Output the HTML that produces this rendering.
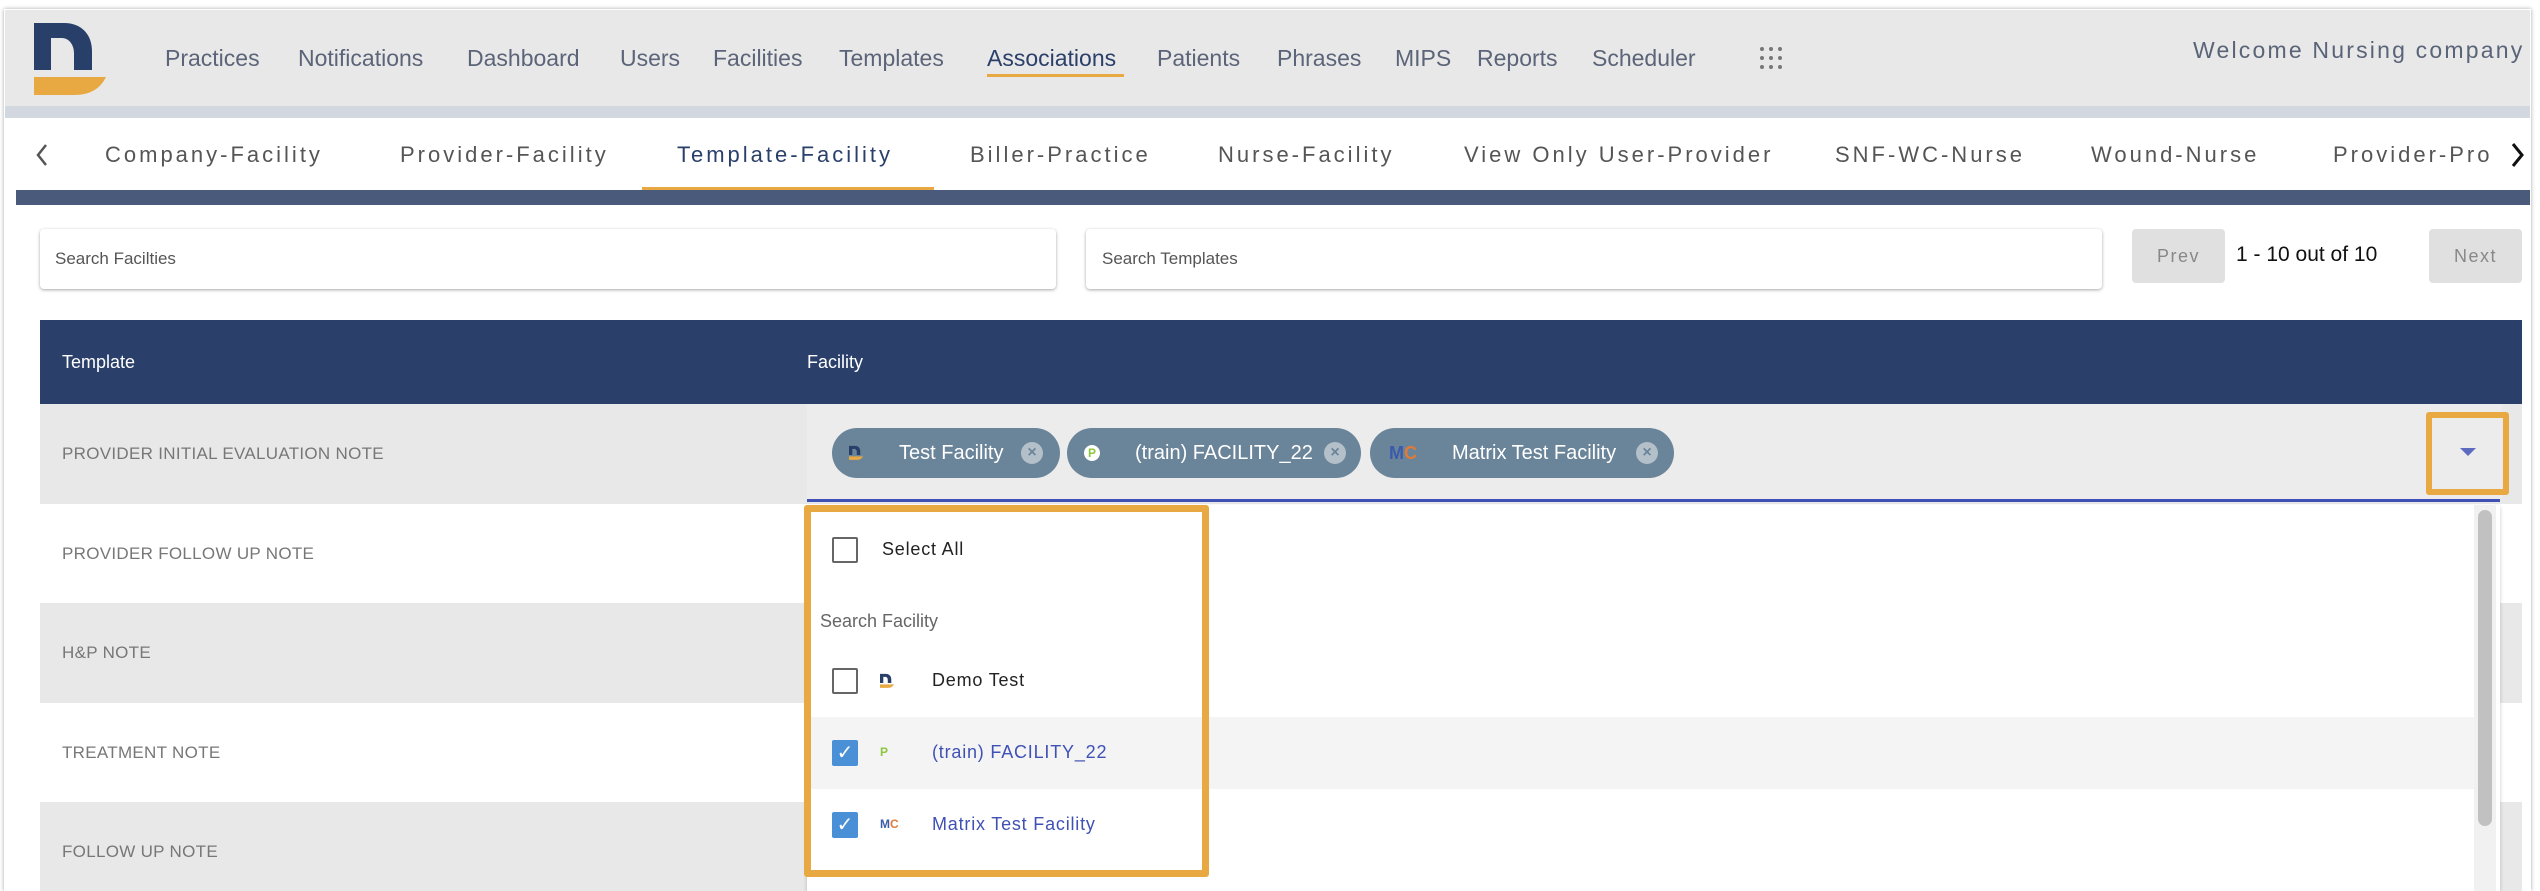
<!DOCTYPE html>
<html><head><meta charset="utf-8"><style>
*{margin:0;padding:0;box-sizing:border-box}
body{width:2540px;height:891px;background:#fff;position:relative;overflow:hidden;font-family:"Liberation Sans",sans-serif}
.a{position:absolute;white-space:nowrap}
.nav{top:45px;font-size:23px;color:#5b6478}
.tab{top:142px;font-size:22px;color:#555;letter-spacing:3px}
.lbl{left:62px;font-size:17px;color:#777;letter-spacing:.3px}
.chip{position:absolute;top:428px;height:50px;border-radius:25px;background:#6a8499}
.ct{position:absolute;top:14px;font-size:20px;color:#fff}
.cx{position:absolute;top:14px;width:22px;height:22px;border-radius:50%;background:#b3c0ca;color:#6a8499;font-size:16px;text-align:center;line-height:22px;font-weight:bold}
.cb{position:absolute;width:26px;height:26px;border:2.5px solid #666;border-radius:2px}
.cbc{position:absolute;width:26px;height:26px;background:#4a90d6;border-radius:2px;color:#fff;font-size:20px;text-align:center;line-height:26px}
</style></head><body>
<div class="a" style="left:4px;top:9px;width:2527px;height:882px;background:#fff;box-shadow:0 0 4px rgba(0,0,0,.35)"></div>
<div class="a" style="left:5px;top:10px;width:2525px;height:96px;background:#e8e8e8"></div>
<div class="a" style="left:5px;top:106px;width:2525px;height:12px;background:#d3d7e0"></div>
<svg class="a" style="left:34px;top:23px" width="72" height="73" viewBox="0 0 72 73">
<path d="M0 0 H30 C48 0 58 12 58 28 V47 H40 V30 C40 22 35 15 28 15 H17 V47 H0 Z" fill="#283f6a"/>
<path d="M0 54 H72 C66 66 56 72 40 72 H0 Z" fill="#e8a942"/>
</svg>
<div class="a nav" style="left:165px">Practices</div>
<div class="a nav" style="left:298px">Notifications</div>
<div class="a nav" style="left:467px">Dashboard</div>
<div class="a nav" style="left:620px">Users</div>
<div class="a nav" style="left:713px">Facilities</div>
<div class="a nav" style="left:839px">Templates</div>
<div class="a nav" style="left:987px;color:#2a3f69">Associations</div>
<div class="a" style="left:987px;top:74px;width:137px;height:3px;background:#e8a942"></div>
<div class="a nav" style="left:1157px">Patients</div>
<div class="a nav" style="left:1277px">Phrases</div>
<div class="a nav" style="left:1395px">MIPS</div>
<div class="a nav" style="left:1477px">Reports</div>
<div class="a nav" style="left:1592px">Scheduler</div>
<svg class="a" style="left:1759px;top:46px" width="24" height="24"><g fill="#777">
<circle cx="3" cy="3" r="2"/><circle cx="12" cy="3" r="2"/><circle cx="21" cy="3" r="2"/>
<circle cx="3" cy="12" r="2"/><circle cx="12" cy="12" r="2"/><circle cx="21" cy="12" r="2"/>
<circle cx="3" cy="21" r="2"/><circle cx="12" cy="21" r="2"/><circle cx="21" cy="21" r="2"/></g></svg>
<div class="a" style="left:2193px;top:37px;width:337px;overflow:hidden;font-size:23px;color:#5a6478;letter-spacing:2.2px">Welcome Nursing company</div>
<div class="a" style="left:8px;top:118px;width:2522px;height:72px;background:#fff"></div>
<svg class="a" style="left:34px;top:143px" width="16" height="24"><path d="M12 2 L4 12 L12 22" stroke="#555" stroke-width="2.5" fill="none"/></svg>
<div class="a tab" style="left:105px">Company-Facility</div>
<div class="a tab" style="left:400px">Provider-Facility</div>
<div class="a tab" style="left:677px;color:#2a3f69">Template-Facility</div>
<div class="a tab" style="left:970px">Biller-Practice</div>
<div class="a tab" style="left:1218px">Nurse-Facility</div>
<div class="a tab" style="left:1464px">View Only User-Provider</div>
<div class="a tab" style="left:1835px">SNF-WC-Nurse</div>
<div class="a tab" style="left:2091px">Wound-Nurse</div>
<div class="a" style="left:2333px;top:142px;width:158px;overflow:hidden;font-size:22px;color:#555;letter-spacing:3px">Provider-Provider</div>
<svg class="a" style="left:2509px;top:142px" width="16" height="26"><path d="M4 2 L13 13 L4 24" stroke="#111" stroke-width="3" fill="none"/></svg>
<div class="a" style="left:642px;top:187px;width:292px;height:3px;background:#e8a942"></div>
<div class="a" style="left:16px;top:190px;width:2514px;height:15px;background:#4a5a7a"></div>
<div class="a" style="left:40px;top:229px;width:1016px;height:60px;background:#fff;border-radius:4px;box-shadow:0 1px 3px rgba(0,0,0,.35)"></div>
<div class="a" style="left:55px;top:249px;font-size:17px;color:#555">Search Facilties</div>
<div class="a" style="left:1086px;top:229px;width:1016px;height:60px;background:#fff;border-radius:4px;box-shadow:0 1px 3px rgba(0,0,0,.35)"></div>
<div class="a" style="left:1102px;top:249px;font-size:17px;color:#555">Search Templates</div>
<div class="a" style="left:2132px;top:229px;width:93px;height:54px;background:#e0e0e0;border-radius:4px;color:#888;font-size:18px;text-align:center;line-height:54px;letter-spacing:1.5px">Prev</div>
<div class="a" style="left:2236px;top:243px;font-size:21px;color:#111">1 - 10 out of 10</div>
<div class="a" style="left:2429px;top:229px;width:93px;height:54px;background:#e0e0e0;border-radius:4px;color:#888;font-size:18px;text-align:center;line-height:54px;letter-spacing:1.5px">Next</div>
<div class="a" style="left:40px;top:320px;width:2482px;height:84px;background:#2a3f69"></div>
<div class="a" style="left:62px;top:352px;font-size:18px;color:#fff">Template</div>
<div class="a" style="left:807px;top:352px;font-size:18px;color:#fff">Facility</div>
<div class="a" style="left:40px;top:404px;width:2482px;height:100px;background:#e8e8e8"></div>
<div class="a" style="left:807px;top:404px;width:1695px;height:95px;background:#ececec"></div>
<div class="a" style="left:807px;top:499px;width:1693px;height:3px;background:#3f51b5"></div>
<div class="a" style="left:40px;top:603px;width:2482px;height:100px;background:#e8e8e8"></div>
<div class="a" style="left:40px;top:802px;width:2482px;height:89px;background:#e8e8e8"></div>
<div class="a lbl" style="top:444px">PROVIDER INITIAL EVALUATION NOTE</div>
<div class="a lbl" style="top:544px">PROVIDER FOLLOW UP NOTE</div>
<div class="a lbl" style="top:643px">H&amp;P NOTE</div>
<div class="a lbl" style="top:743px">TREATMENT NOTE</div>
<div class="a lbl" style="top:842px">FOLLOW UP NOTE</div>
<div class="chip" style="left:832px;width:228px">
 <svg class="a" style="left:17px;top:16px" width="14" height="18" viewBox="0 0 72 73"><path d="M0 0 H30 C48 0 58 12 58 28 V47 H40 V30 C40 22 35 15 28 15 H17 V47 H0 Z" fill="#283f6a"/><path d="M0 54 H72 C66 66 56 72 40 72 H0 Z" fill="#e8a942"/></svg>
 <div class="ct" style="left:67px">Test Facility</div><div class="cx" style="left:189px">×</div></div>
<div class="chip" style="left:1067px;width:294px">
 <div class="a" style="left:17px;top:17px;width:16px;height:16px;border-radius:50%;background:#fff;color:#8cc63f;font-size:12px;text-align:center;line-height:16px;font-weight:bold">P</div>
 <div class="ct" style="left:68px">(train) FACILITY_22</div><div class="cx" style="left:257px">×</div></div>
<div class="chip" style="left:1370px;width:304px">
 <div class="a" style="left:19px;top:15px;font-size:18px;font-weight:bold;color:#3b5ba9">M<span style="color:#e07a3a">C</span></div>
 <div class="ct" style="left:82px">Matrix Test Facility</div><div class="cx" style="left:266px">×</div></div>
<div class="a" style="left:2426px;top:412px;width:83px;height:83px;border:6px solid #e8a942;border-radius:3px"></div>
<svg class="a" style="left:2460px;top:448px" width="16" height="10"><path d="M0 0 H16 L8 8 Z" fill="#5c6bc0"/></svg>
<div class="a" style="left:807px;top:505px;width:1693px;height:386px;background:#fff;box-shadow:0 2px 4px rgba(0,0,0,.2)"></div>
<div class="a" style="left:811px;top:717px;width:1663px;height:72px;background:#f4f4f4"></div>
<div class="a" style="left:2474px;top:505px;width:22px;height:386px;background:#f1f1f1"></div>
<div class="a" style="left:2478px;top:510px;width:14px;height:316px;background:#c1c1c1;border-radius:7px"></div>
<div class="a" style="left:804px;top:505px;width:405px;height:372px;border:7px solid #e8a942;border-radius:3px"></div>
<div class="cb" style="left:832px;top:537px"></div>
<div class="a" style="left:882px;top:539px;font-size:18px;color:#222;letter-spacing:.8px">Select All</div>
<div class="a" style="left:820px;top:611px;font-size:18px;color:#666">Search Facility</div>
<div class="cb" style="left:832px;top:668px"></div>
<svg class="a" style="left:880px;top:673px" width="14" height="16" viewBox="0 0 72 73"><path d="M0 0 H30 C48 0 58 12 58 28 V47 H40 V30 C40 22 35 15 28 15 H17 V47 H0 Z" fill="#283f6a"/><path d="M0 54 H72 C66 66 56 72 40 72 H0 Z" fill="#e8a942"/></svg>
<div class="a" style="left:932px;top:670px;font-size:18px;color:#222;letter-spacing:.8px">Demo Test</div>
<div class="cbc" style="left:832px;top:740px">✓</div>
<div class="a" style="left:880px;top:745px;font-size:12px;color:#8cc63f;font-weight:bold">P</div>
<div class="a" style="left:932px;top:742px;font-size:18px;color:#3f51b5;letter-spacing:.8px">(train) FACILITY_22</div>
<div class="cbc" style="left:832px;top:812px">✓</div>
<div class="a" style="left:880px;top:817px;font-size:12px;font-weight:bold;color:#3b5ba9">M<span style="color:#e07a3a">C</span></div>
<div class="a" style="left:932px;top:814px;font-size:18px;color:#3f51b5;letter-spacing:.8px">Matrix Test Facility</div>
</body></html>
